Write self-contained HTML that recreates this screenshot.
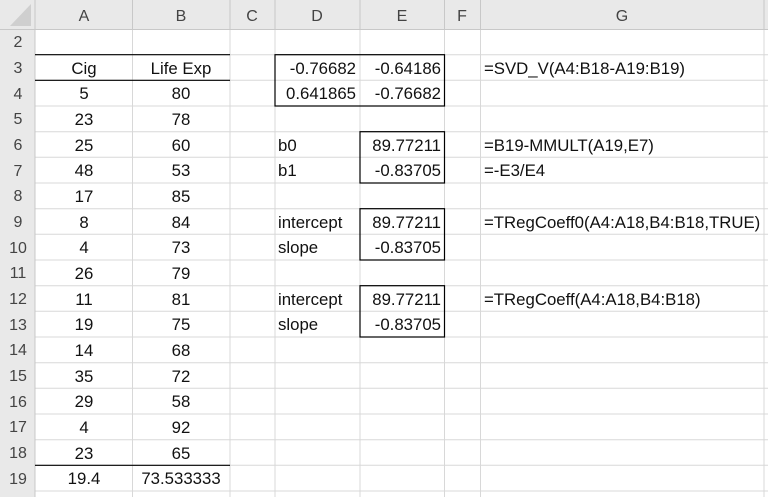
<!DOCTYPE html>
<html><head><meta charset="utf-8"><style>
html,body{margin:0;padding:0;background:#fff;overflow:hidden}
svg{display:block}
text{font-family:"Liberation Sans",sans-serif;font-size:16.8px;fill:#111}
.h{fill:#444;font-size:16px}
</style></head><body>
<svg width="768" height="497" viewBox="0 0 768 497">
<rect x="0" y="0" width="768" height="29" fill="#e9e9e9"/>
<rect x="0" y="0" width="35" height="497" fill="#e9e9e9"/>
<polygon points="31,4 31,26 10,26" fill="#cfcfcf"/>
<g stroke="#d8d8d8" stroke-width="1">
<line x1="35" y1="54.7" x2="768" y2="54.7"/><line x1="35" y1="80.3" x2="768" y2="80.3"/>
<line x1="35" y1="106" x2="768" y2="106"/><line x1="35" y1="131.7" x2="768" y2="131.7"/>
<line x1="35" y1="157.3" x2="768" y2="157.3"/><line x1="35" y1="183" x2="768" y2="183"/>
<line x1="35" y1="208.7" x2="768" y2="208.7"/><line x1="35" y1="234.3" x2="768" y2="234.3"/>
<line x1="35" y1="260" x2="768" y2="260"/><line x1="35" y1="285.7" x2="768" y2="285.7"/>
<line x1="35" y1="311.3" x2="768" y2="311.3"/><line x1="35" y1="337" x2="768" y2="337"/>
<line x1="35" y1="362.7" x2="768" y2="362.7"/><line x1="35" y1="388.3" x2="768" y2="388.3"/>
<line x1="35" y1="414" x2="768" y2="414"/><line x1="35" y1="439.7" x2="768" y2="439.7"/>
<line x1="35" y1="465.3" x2="768" y2="465.3"/><line x1="35" y1="491" x2="768" y2="491"/>
<line x1="132.5" y1="29" x2="132.5" y2="497"/><line x1="230" y1="29" x2="230" y2="497"/>
<line x1="275" y1="29" x2="275" y2="497"/><line x1="360" y1="29" x2="360" y2="497"/>
<line x1="444.5" y1="29" x2="444.5" y2="497"/><line x1="480.5" y1="29" x2="480.5" y2="497"/>
<line x1="764" y1="29" x2="764" y2="497"/>
</g>
<g stroke="#c8c8c8" stroke-width="1">
<line x1="0" y1="29.5" x2="768" y2="29.5"/><line x1="35" y1="0" x2="35" y2="497"/>
<line x1="132.5" y1="0" x2="132.5" y2="29"/><line x1="230" y1="0" x2="230" y2="29"/>
<line x1="275" y1="0" x2="275" y2="29"/><line x1="360" y1="0" x2="360" y2="29"/>
<line x1="444.5" y1="0" x2="444.5" y2="29"/><line x1="480.5" y1="0" x2="480.5" y2="29"/>
<line x1="764" y1="0" x2="764" y2="29"/>
</g>
<g stroke="#000" stroke-width="1.2" fill="none">
<line x1="35" y1="54.7" x2="230" y2="54.7"/><line x1="35" y1="80.3" x2="230" y2="80.3"/>
<line x1="35" y1="465.3" x2="230" y2="465.3"/>
<rect x="275" y="54.7" width="169.5" height="51.3"/>
<rect x="360" y="131.7" width="84.5" height="51.3"/>
<rect x="360" y="208.7" width="84.5" height="51.3"/>
<rect x="360" y="285.7" width="84.5" height="51.3"/>
</g>
<g text-anchor="middle" class="h">
<text class="h" x="84" y="21">A</text><text class="h" x="181" y="21">B</text><text class="h" x="252" y="21">C</text>
<text class="h" x="317" y="21">D</text><text class="h" x="402" y="21">E</text><text class="h" x="462" y="21">F</text><text class="h" x="622" y="21">G</text>
</g>
<g text-anchor="middle">
<text class="h" x="18" y="47">2</text><text class="h" x="18" y="73">3</text><text class="h" x="18" y="99">4</text>
<text class="h" x="18" y="124">5</text><text class="h" x="18" y="150">6</text><text class="h" x="18" y="176">7</text>
<text class="h" x="18" y="201">8</text><text class="h" x="18" y="227">9</text><text class="h" x="18" y="253">10</text>
<text class="h" x="18" y="278">11</text><text class="h" x="18" y="304">12</text><text class="h" x="18" y="330">13</text>
<text class="h" x="18" y="355">14</text><text class="h" x="18" y="381">15</text><text class="h" x="18" y="407">16</text>
<text class="h" x="18" y="432">17</text><text class="h" x="18" y="458">18</text><text class="h" x="18" y="484">19</text>
<text x="84" y="74">Cig</text><text x="181" y="74">Life Exp</text>
<text x="84" y="99">5</text><text x="181" y="99">80</text>
<text x="84" y="125">23</text><text x="181" y="125">78</text>
<text x="84" y="151">25</text><text x="181" y="151">60</text>
<text x="84" y="176">48</text><text x="181" y="176">53</text>
<text x="84" y="202">17</text><text x="181" y="202">85</text>
<text x="84" y="228">8</text><text x="181" y="228">84</text>
<text x="84" y="253">4</text><text x="181" y="253">73</text>
<text x="84" y="279">26</text><text x="181" y="279">79</text>
<text x="84" y="305">11</text><text x="181" y="305">81</text>
<text x="84" y="330">19</text><text x="181" y="330">75</text>
<text x="84" y="356">14</text><text x="181" y="356">68</text>
<text x="84" y="382">35</text><text x="181" y="382">72</text>
<text x="84" y="407">29</text><text x="181" y="407">58</text>
<text x="84" y="433">4</text><text x="181" y="433">92</text>
<text x="84" y="459">23</text><text x="181" y="459">65</text>
<text x="84" y="484">19.4</text><text x="181" y="484">73.533333</text>
</g>
<g text-anchor="end">
<text x="356" y="74">-0.76682</text><text x="356" y="99">0.641865</text>
<text x="441" y="74">-0.64186</text><text x="441" y="99">-0.76682</text>
<text x="441" y="151">89.77211</text><text x="441" y="176">-0.83705</text>
<text x="441" y="228">89.77211</text><text x="441" y="253">-0.83705</text>
<text x="441" y="305">89.77211</text><text x="441" y="330">-0.83705</text>
</g>
<g>
<text x="278" y="151">b0</text><text x="278" y="176">b1</text>
<text x="278" y="228">intercept</text><text x="278" y="253">slope</text>
<text x="278" y="305">intercept</text><text x="278" y="330">slope</text>
<text x="484" y="74">=SVD_V(A4:B18-A19:B19)</text>
<text x="484" y="151">=B19-MMULT(A19,E7)</text>
<text x="484" y="176">=-E3/E4</text>
<text x="484" y="228">=TRegCoeff0(A4:A18,B4:B18,TRUE)</text>
<text x="484" y="305">=TRegCoeff(A4:A18,B4:B18)</text>
</g>
</svg>
</body></html>
